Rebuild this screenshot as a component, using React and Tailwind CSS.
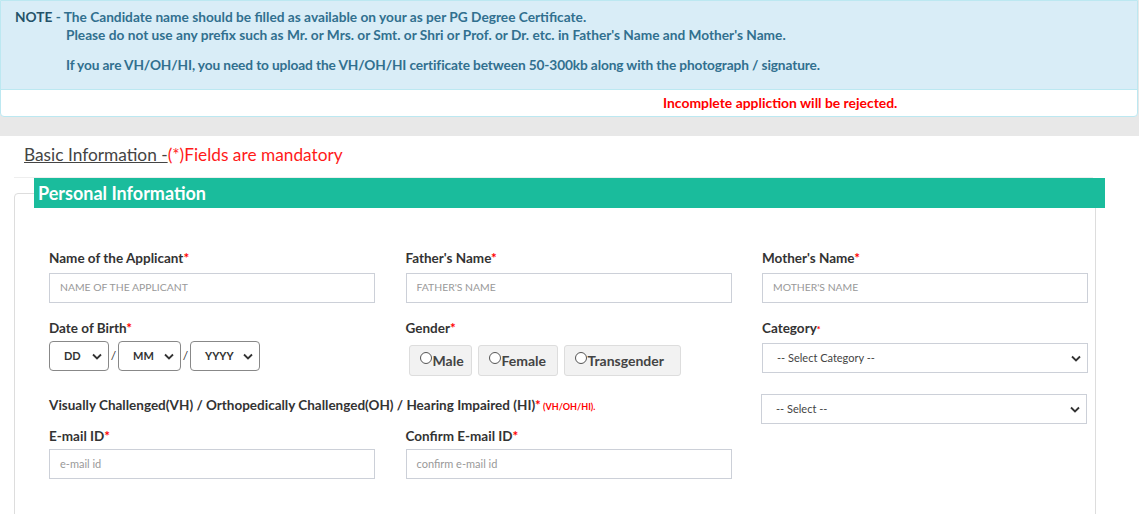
import React from "react";

const Req = () => <span className="text-[#ff0000]">*</span>;

function Chevron() {
  return (
    <svg width="10" height="7" viewBox="0 0 10 7" className="shrink-0">
      <path d="M1 1.5 L5 5.5 L9 1.5" fill="none" stroke="#333" strokeWidth="1.8" />
    </svg>
  );
}

function Label({ children, className = "" }) {
  return <div className={`text-[13.5px] leading-[18px] font-bold text-[#333] ${className}`}>{children}</div>;
}

function TextInput({ placeholder, upper }) {
  return (
    <div className={`h-[30px] border border-[#ccd0d8] flex items-center px-[10px] text-[#999] ${upper ? "uppercase text-[10.4px]" : "text-[11px]"}`}>
      {placeholder}
    </div>
  );
}

function SelectBox({ text, w, bold }) {
  return (
    <div
      className={`h-[30px] border flex items-center justify-between ${bold ? "border-[#888] rounded-[4px] pl-[14px] pr-[6px] font-bold text-[#333] text-[11px]" : "border-[#ccd0d8] px-[14px] pr-[6px] text-[11px] text-[#444]"}`}
      style={{ width: w }}
    >
      <span>{text}</span>
      <Chevron />
    </div>
  );
}

function Radio({ label, w }) {
  return (
    <div
      className="h-[31px] bg-[#f2f2f2] border border-[#ddd] rounded-[3px] flex items-start pt-[4px] pl-[10px] font-bold text-[#444] text-[14px] leading-[20px]"
      style={{ width: w }}
    >
      <span className="w-[12px] h-[12px] rounded-full border border-[#555] bg-white mt-[2px] mr-[1px] shrink-0"></span>
      <span className="mt-[1px]">{label}</span>
    </div>
  );
}

const Slash = () => <span className="w-[9px] text-center text-[#333] text-[12px]">/</span>;

export default function App() {
  return (
    <div className="w-[1139px] h-[514px] overflow-hidden bg-[#e8e8e8]" style={{ fontFamily: "Lato, 'Liberation Sans', sans-serif" }}>
      {/* Alert */}
      <div className="w-[1138px] border border-[#bce8f1] rounded-b-[4px] bg-white">
        <div className="bg-[#d9edf7] h-[89px] border-b border-[#bce8f1] px-[14px] pt-[7px] text-[13.7px] font-bold text-[#31708f] leading-[18px]">
          <div><span className="text-[#245269]">NOTE</span> - The Candidate name should be filled as available on your as per PG Degree Certificate.</div>
          <div className="pl-[51px]">Please do not use any prefix such as Mr. or Mrs. or Smt. or Shri or Prof. or Dr. etc. in Father's Name and Mother's Name.</div>
          <div className="pl-[51px] mt-[12px] tracking-[-0.12px]">If you are VH/OH/HI, you need to upload the VH/OH/HI certificate between 50-300kb along with the photograph / signature.</div>
        </div>
        <div className="h-[26px] flex items-center pl-[662px] text-[13.9px] font-bold text-[#ff0000]">
          Incomplete appliction will be rejected.
        </div>
      </div>

      <div className="mt-[19px] bg-white h-[380px] pt-[8px]">
        <div className="pl-[24px] text-[17.3px] leading-[22px]">
          <span className="underline text-[#444]">Basic Information -</span>
          <span className="text-[#ff1a1a]">(*)Fields are mandatory</span>
        </div>
        <div className="ml-[14px] w-[1079px] mt-[11px] border-t border-[#eee]"></div>
        <div className="relative ml-[14px] w-[1082px] mt-[15px] h-[330px] border border-[#ddd] rounded-[4px]">
          <div className="absolute left-[19px] top-[-16px] w-[1071px] h-[30px] bg-[#1abc9c] text-white font-bold text-[18px] pl-[4px] flex items-center">
            Personal Information
          </div>

          <div className="pt-[55px] pl-[34px] pr-[8px]">
            <div className="grid grid-cols-[326px_326px_326px] gap-x-[30.5px]">
              <div>
                <Label className="mb-[6px]">Name of the Applicant<Req /></Label>
                <TextInput placeholder="Name of the Applicant" upper />
              </div>
              <div>
                <Label className="mb-[6px]">Father's Name<Req /></Label>
                <TextInput placeholder="Father's Name" upper />
              </div>
              <div>
                <Label className="mb-[6px]">Mother's Name<Req /></Label>
                <TextInput placeholder="Mother's Name" upper />
              </div>
            </div>

            <div className="grid grid-cols-[326px_326px_326px] gap-x-[30.5px] mt-[16px]">
              <div>
                <Label className="mb-[4px]">Date of Birth<Req /></Label>
                <div className="flex items-center">
                  <SelectBox text="DD" w={60} bold />
                  <Slash />
                  <SelectBox text="MM" w={63} bold />
                  <Slash />
                  <SelectBox text="YYYY" w={70} bold />
                </div>
              </div>
              <div>
                <Label className="mb-[8px]">Gender<Req /></Label>
                <div className="flex gap-[6px] pl-[3px]">
                  <Radio label="Male" w={63} />
                  <Radio label="Female" w={80} />
                  <Radio label="Transgender" w={117} />
                </div>
              </div>
              <div>
                <Label className="mb-[4px]">Category<span className="text-[#ff0000] text-[9px]">*</span></Label>
                <SelectBox text="-- Select Category --" w={326} />
              </div>
            </div>

            <div className="flex mt-[18px]">
              <div className="w-[713px]">
                <Label className="mt-[2px]">
                  Visually Challenged(VH) / Orthopedically Challenged(OH) / Hearing Impaired (HI)<span className="text-[#ff0000]">*</span>
                  <span className="text-[#ff0000] text-[9px]"> (VH/OH/HI).</span>
                </Label>
                <div className="grid grid-cols-[326px_326px] gap-x-[30.5px] mt-[11px]">
                  <div>
                    <Label className="mb-[4px]">E-mail ID<Req /></Label>
                    <TextInput placeholder="e-mail id" />
                  </div>
                  <div>
                    <Label className="mb-[4px]">Confirm E-mail ID<Req /></Label>
                    <TextInput placeholder="confirm e-mail id" />
                  </div>
                </div>
              </div>
              <div>
                <SelectBox text="-- Select --" w={326} />
              </div>
            </div>
          </div>
        </div>
      </div>
    </div>
  );
}
